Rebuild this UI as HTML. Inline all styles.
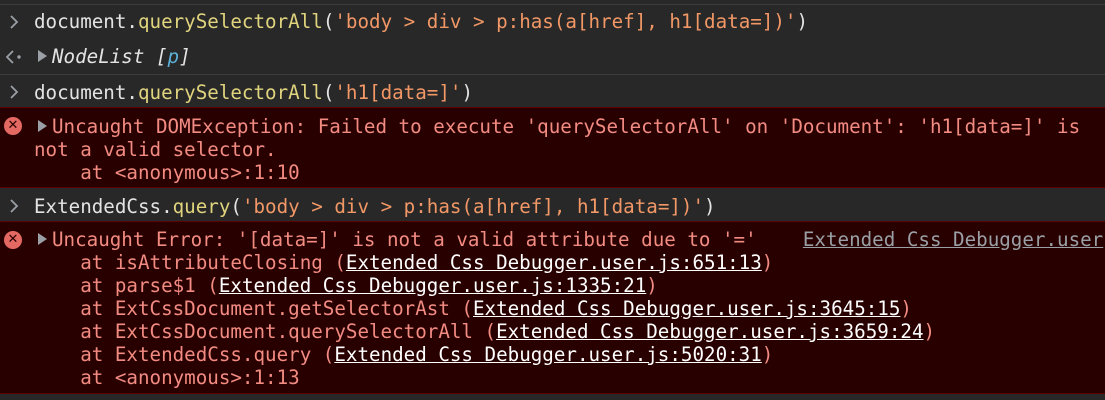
<!DOCTYPE html>
<html><head><style>
html,body{margin:0;padding:0}
body{width:1105px;height:400px;background:#282828;overflow:hidden;position:relative;font-family:"DejaVu Sans Mono","Liberation Mono",monospace;font-size:19.2px;color:#e3e3e3}
.row{position:absolute;left:0;width:1105px;white-space:pre;overflow:hidden}
.sep{border-top:1px solid #3c3c3c}
.err{background:#290000;border-top:1px solid #5c0000;border-bottom:1px solid #5c0000;color:#f28b82}
.ln{position:absolute;left:34px;white-space:pre;line-height:23px}
.m{color:#e0d47e}.s{color:#f29766}
.tri{display:inline-block;width:0;height:0;border-top:6px solid transparent;border-bottom:6px solid transparent;border-left:9px solid #9aa0a6;margin-right:5px;vertical-align:1px}
.x{position:absolute;left:4px;width:18px;height:18px;border-radius:50%;background:#e46962;color:#290000;font:bold 13px/18px "DejaVu Sans",sans-serif;text-align:center}
a{color:#fff;text-decoration:underline}
a.g{color:#9aa0a6}
</style></head><body>
<div class="row sep" style="top:4px;height:70px"></div>
<div class="ln" style="top:10px">document.<span class="m">querySelectorAll</span>(<span class="s">'body &gt; div &gt; p:has(a[href], h1[data=])'</span>)</div>
<svg style="position:absolute;left:7px;top:14px" width="16" height="16"><path d="M4 2l6 6-6 6" stroke="#9aa0a6" stroke-width="1.8" fill="none"/></svg>
<svg style="position:absolute;left:5px;top:49px" width="18" height="16"><path d="M8 2L2 8l6 6" stroke="#9aa0a6" stroke-width="1.8" fill="none"/><circle cx="14" cy="8" r="1.7" fill="#9aa0a6"/></svg>
<div class="ln" style="top:45px;left:38px"><span class="tri"></span><i>NodeList [<span style="color:#5db0d7">p</span>]</i></div>
<div class="row sep" style="top:74px;height:33px"></div>
<svg style="position:absolute;left:7px;top:84px" width="16" height="16"><path d="M4 2l6 6-6 6" stroke="#9aa0a6" stroke-width="1.8" fill="none"/></svg>
<div class="ln" style="top:81px">document.<span class="m">querySelectorAll</span>(<span class="s">'h1[data=]'</span>)</div>
<div class="row err" style="top:107px;height:79px"></div>
<div class="x" style="top:117px">✕</div>
<div class="ln" style="top:115px;left:38px;color:#f28b82"><span class="tri"></span>Uncaught DOMException: Failed to execute 'querySelectorAll' on 'Document': 'h1[data=]' is  ]</div>
<div class="ln" style="top:138px;color:#f28b82">not a valid selector.
    at &lt;anonymous&gt;:1:10</div>
<svg style="position:absolute;left:7px;top:198px" width="16" height="16"><path d="M4 2l6 6-6 6" stroke="#9aa0a6" stroke-width="1.8" fill="none"/></svg>
<div class="ln" style="top:195px">ExtendedCss.<span class="m">query</span>(<span class="s">'body &gt; div &gt; p:has(a[href], h1[data=])'</span>)</div>
<div class="row err" style="top:221px;height:171px"></div>
<div class="x" style="top:231px">✕</div>
<div class="ln" style="top:228px;left:38px;color:#f28b82"><span class="tri"></span>Uncaught Error: '[data=]' is not a valid attribute due to '='    <a class="g">Extended Css Debugger.user</a></div>
<div class="ln" style="top:251px;color:#f28b82">    at isAttributeClosing (<a>Extended Css Debugger.user.js:651:13</a>)
    at parse$1 (<a>Extended Css Debugger.user.js:1335:21</a>)
    at ExtCssDocument.getSelectorAst (<a>Extended Css Debugger.user.js:3645:15</a>)
    at ExtCssDocument.querySelectorAll (<a>Extended Css Debugger.user.js:3659:24</a>)
    at ExtendedCss.query (<a>Extended Css Debugger.user.js:5020:31</a>)
    at &lt;anonymous&gt;:1:13</div>
</body></html>
